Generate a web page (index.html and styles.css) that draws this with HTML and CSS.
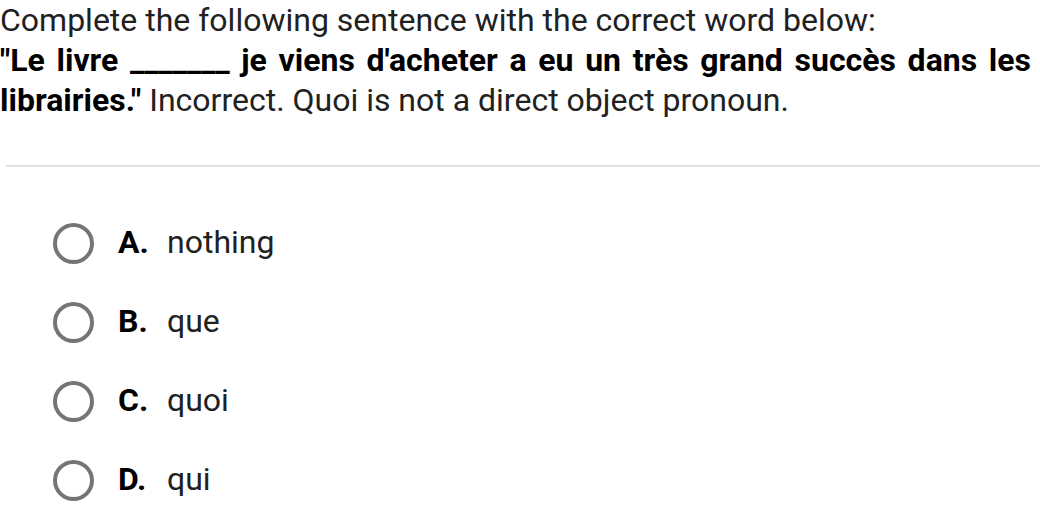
FILE: index.html
```html
<!DOCTYPE html>
<html lang="en">
<head>
<meta charset="utf-8">
<link rel="stylesheet" href="styles.css">
</head>
<body>
<div class="question">
  <p class="prompt">Complete the following sentence with the correct word below:<br><b>"Le livre _______ je viens d'acheter a eu un très grand succès dans les librairies."</b> Incorrect. Quoi is not a direct object pronoun.</p>
</div>
<hr class="divider">
<ul class="options">
  <li class="option"><span class="radio"></span><span class="letter">A.</span><span class="answer">nothing</span></li>
  <li class="option"><span class="radio"></span><span class="letter">B.</span><span class="answer">que</span></li>
  <li class="option"><span class="radio"></span><span class="letter">C.</span><span class="answer">quoi</span></li>
  <li class="option"><span class="radio"></span><span class="letter">D.</span><span class="answer">qui</span></li>
</ul>
</body>
</html>
```
FILE: styles.css
```css
html, body {
  margin: 0;
  padding: 0;
  background: #ffffff;
}
body {
  font-family: Roboto, "Liberation Sans", sans-serif;
  color: #212121;
  width: 1040px;
  overflow: hidden;
}
.question {
  width: 1031px;
}
.prompt {
  margin: 0;
  font-size: 32px;
  line-height: 40px;
  text-align: justify;
}
.prompt b {
  color: #000;
  font-weight: 700;
}
.divider {
  margin: 45px 0 0 6px;
  border: 0;
  border-top: 2px solid #e0e0e0;
  height: 0;
}
.options {
  list-style: none;
  margin: 0;
  padding: 37px 0 0 53px;
}
.option {
  display: flex;
  align-items: center;
  height: 79px;
  font-size: 32px;
}
.radio {
  width: 33px;
  height: 33px;
  border: 4px solid #757575;
  border-radius: 50%;
  flex: none;
  margin-right: 24px;
}
.letter {
  font-weight: 700;
  color: #000;
  width: 49px;
  padding-bottom: 4px;
}
.answer {
  color: #212121;
  padding-bottom: 4px;
}
```
